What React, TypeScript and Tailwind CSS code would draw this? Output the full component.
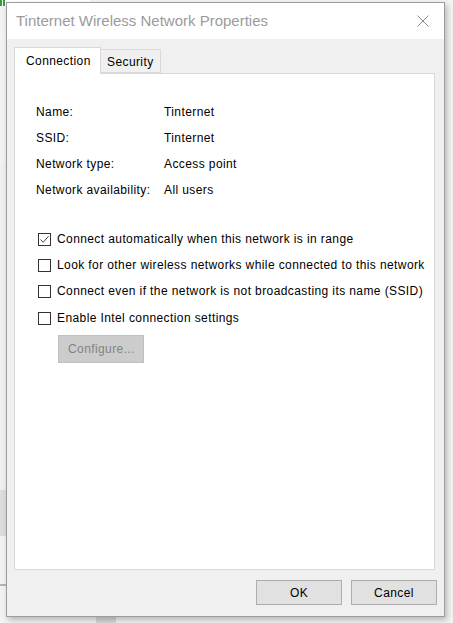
import React from "react";

const font = { fontFamily: '"Segoe UI", "Liberation Sans", Arial, sans-serif' };

function CheckRow({ checked, label }: { checked?: boolean; label: string }) {
  return (
    <div className="flex h-[26px] items-center">
      <span className="flex h-[13px] w-[13px] items-center justify-center border border-[#333333] bg-white">
        {checked && (
          <svg width="11" height="11" viewBox="0 0 11 11">
            <path d="M1.5 5.5 L4.2 8.3 L9.6 2.2" fill="none" stroke="#444444" strokeWidth="1" />
          </svg>
        )}
      </span>
      <span className="ml-[6px] text-[12px] tracking-[0.4px] text-black">{label}</span>
    </div>
  );
}

const info = [
  ["Name:", "Tinternet"],
  ["SSID:", "Tinternet"],
  ["Network type:", "Access point"],
  ["Network availability:", "All users"],
];

export default function App() {
  return (
    <div className="relative h-[623px] w-[453px] overflow-hidden bg-[#f3f3f3]" style={font}>
      {/* window behind the dialog */}
      <div className="absolute left-0 top-0 flex h-[6px] w-[90px] gap-[1px] bg-white">
        <span className="h-[6px] w-[2px] bg-[#3d9a3d]" />
        <span className="h-[6px] w-[2px] bg-[#3d9a3d]" />
      </div>
      <div className="absolute left-0 top-[164px] h-[326px] w-[6px] bg-[#f0f0f0]" />
      <div className="absolute left-0 top-[490px] h-[46px] w-[6px] bg-[#dddddd]" />
      <div className="absolute left-0 top-[584px] h-[2px] w-[6px] bg-[#b5b5b5]" />
      <div className="absolute left-[96px] top-[617px] h-[6px] w-[20px] bg-[#d8d8d8]" />

      {/* dialog */}
      <div className="absolute left-[6px] top-[2px] flex h-[615px] w-[439px] flex-col border border-[#9d9d9d] bg-[#f0f0f0] shadow-[2px_3px_6px_rgba(0,0,0,0.25)]">
        <div className="flex h-[36px] items-center justify-between bg-white pl-[9px] pr-[15px]">
          <span className="text-[15px] text-[#9b9b9b]">Tinternet Wireless Network Properties</span>
          <svg width="12" height="12" viewBox="0 0 12 12">
            <path d="M0.5 0.5 L11.5 11.5 M11.5 0.5 L0.5 11.5" stroke="#8a8a8a" strokeWidth="1" />
          </svg>
        </div>

        <div className="flex flex-1 flex-col pl-[7px] pr-[9px] pt-[8px] text-[12px] tracking-[0.4px]">
          <div className="flex items-end">
            <div className="relative z-10 -mb-px flex h-[27px] w-[87px] items-center border border-b-0 border-[#d9d9d9] bg-white pl-[11px] text-black">
              Connection
            </div>
            <div className="flex h-[24px] w-[60px] items-center border border-l-0 border-[#d9d9d9] bg-[#f0f0f0] pl-[6px] pt-[2px] text-black">
              Security
            </div>
          </div>

          <div className="flex h-[497px] flex-col border border-[#d9d9d9] bg-white pl-[21px] pt-[25px]">
            <div className="flex flex-col">
              {info.map(([k, v]) => (
                <div key={k} className="flex h-[26px] items-center text-black">
                  <span className="w-[128px]">{k}</span>
                  <span>{v}</span>
                </div>
              ))}
            </div>

            <div className="mt-[23px] flex flex-col pl-[2px]">
              <CheckRow checked label="Connect automatically when this network is in range" />
              <CheckRow label="Look for other wireless networks while connected to this network" />
              <CheckRow label="Connect even if the network is not broadcasting its name (SSID)" />
              <div className="h-[1px]" />
              <CheckRow label="Enable Intel connection settings" />
            </div>

            <button
              type="button"
              disabled
              className="ml-[22px] mt-[4px] flex h-[28px] w-[86px] items-center justify-start border border-[#bfbfbf] bg-[#cccccc] pl-[9px] text-[#838383]"
            >
              Configure...
            </button>
          </div>

          <div className="mt-[10px] flex justify-end gap-[9px]">
            <button
              type="button"
              className="h-[25px] w-[86px] border border-[#adadad] bg-[#e1e1e1] text-black"
            >
              OK
            </button>
            <button
              type="button"
              className="-mr-[2px] h-[25px] w-[86px] border border-[#adadad] bg-[#e1e1e1] text-black"
            >
              Cancel
            </button>
          </div>
        </div>
      </div>
    </div>
  );
}
